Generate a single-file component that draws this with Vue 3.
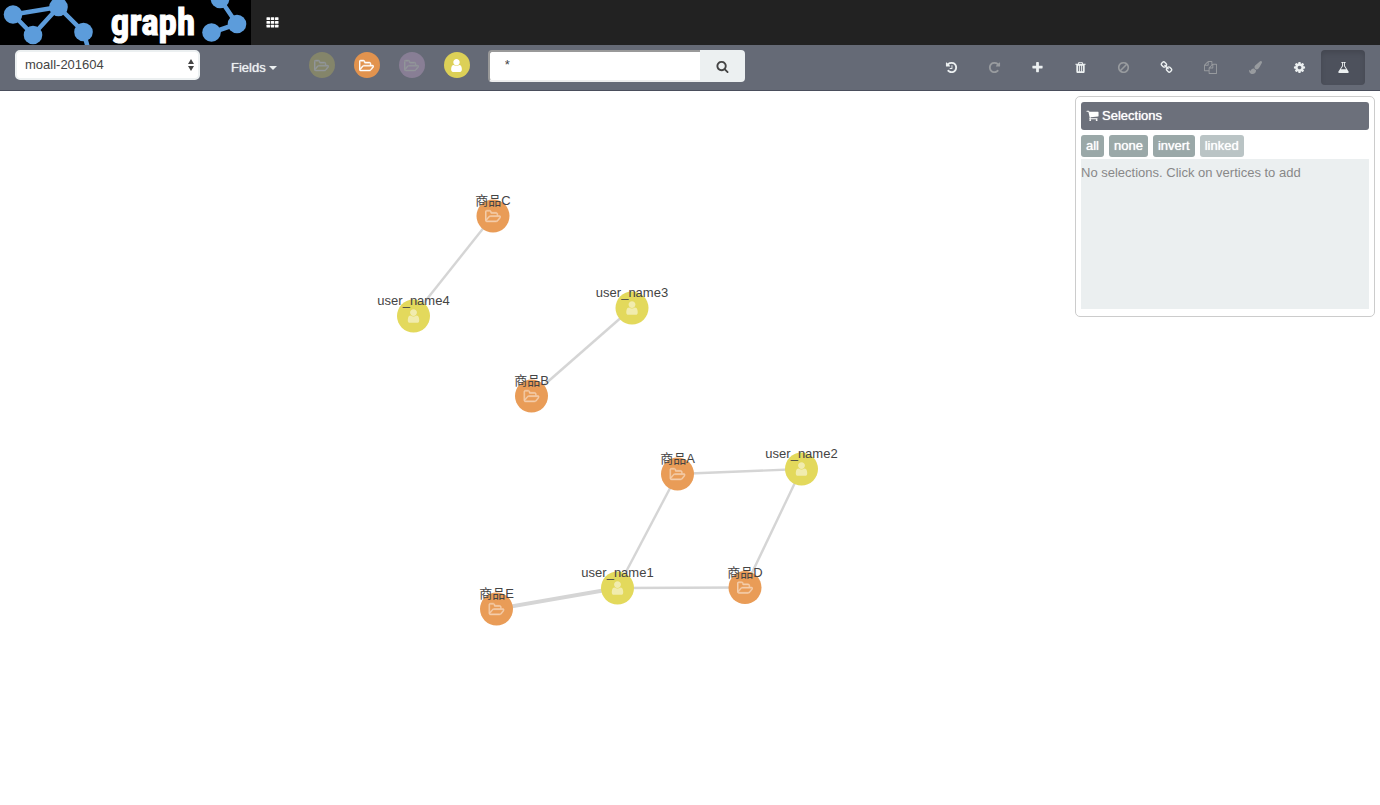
<template>
  <div class="app">
    <header class="navbar">
      <a class="brand" href="#" aria-label="graph">
        <svg width="251" height="45" viewBox="0 0 251 45">
          <rect width="251" height="45" fill="#000" />
          <g stroke="#5c9cdb" stroke-width="4.500" fill="none">
            <path d="M33 35L13 14.500L58.500 7L33 35M58.500 7L83.500 32L88 48" />
            <path d="M220 -1L237 24L212 32.500" />
          </g>
          <g fill="#5c9cdb">
            <circle cx="13" cy="14.500" r="9.300" />
            <circle cx="58.500" cy="7" r="9.300" />
            <circle cx="33" cy="35" r="9.300" />
            <circle cx="83.500" cy="32" r="9.300" />
            <circle cx="220" cy="-1" r="9.300" />
            <circle cx="237" cy="24" r="9.300" />
            <circle cx="211.500" cy="32.500" r="9.300" />
          </g>
          <text class="brand-text" x="153" y="35" text-anchor="middle">graph</text>
        </svg>
      </a>
      <button class="apps" type="button" aria-label="Apps">
        <svg class="icon" viewBox="0 0 26 26">
          <template v-for="row in 3" :key="row">
            <rect
              v-for="col in 3"
              :key="col"
              :x="col * 8.500 - 7.500"
              :y="row * 7.500 - 5"
              width="7"
              height="5.500"
              rx="1"
            />
          </template>
        </svg>
      </button>
    </header>

    <form class="toolbar" @submit.prevent>
      <div class="select-wrap">
        <select v-model="index" class="index-select" aria-label="Index">
          <option>moall-201604</option>
        </select>
        <svg class="select-arrows" width="6" height="12" viewBox="0 0 6 12">
          <path d="M0 5L3 0L6 5zM0 7L3 12L6 7z" />
        </svg>
      </div>

      <button class="fields" type="button">
        Fields
        <span class="caret"></span>
      </button>

      <div class="field-list">
        <button
          v-for="field in fields"
          :key="field.name"
          class="field"
          :class="[field.type, { inactive: !field.active }]"
          type="button"
          :aria-label="field.name"
        >
          <svg class="field-icon" :class="field.icon" :viewBox="icons[field.icon].box">
            <path :d="icons[field.icon].path" />
          </svg>
        </button>
      </div>

      <div class="search">
        <input v-model="query" class="search-input" type="text" aria-label="Search" />
        <button class="search-btn" type="submit" aria-label="Search">
          <svg class="icon" viewBox="0 0 1792 1792"><path :d="icons.search.path" /></svg>
        </button>
      </div>

      <div class="actions">
        <button
          v-for="action in actions"
          :key="action.icon"
          class="action"
          :class="{ wide: action.wide, active: action.active }"
          type="button"
          :disabled="action.disabled"
          :aria-label="action.label"
        >
          <svg class="icon" viewBox="0 0 1792 1792"><path :d="icons[action.icon].path" /></svg>
        </button>
      </div>
    </form>

    <main class="workspace">
      <svg class="graph">
        <line
          v-for="edge in edges"
          :key="edge.from + edge.to"
          class="edge"
          :x1="nodes[edge.from].x"
          :y1="nodes[edge.from].y"
          :x2="nodes[edge.to].x"
          :y2="nodes[edge.to].y"
          :stroke-width="edge.weight"
        />
        <g
          v-for="(node, id) in nodes"
          :key="id"
          class="node"
          :transform="`translate(${node.x}, ${node.y})`"
        >
          <circle r="16.500" :class="node.icon" />
          <svg
            class="node-icon"
            :class="node.icon"
            x="-8"
            y="-8"
            width="16"
            height="16"
            :viewBox="icons[node.icon].box"
          >
            <path :d="icons[node.icon].path" />
          </svg>
          <text y="-11" text-anchor="middle">{{ node.label }}</text>
        </g>
      </svg>

      <aside class="sidebar">
        <h2 class="sidebar-header">
          <svg class="icon" viewBox="0 0 1792 1792"><path :d="icons.cart.path" /></svg>
          Selections
        </h2>
        <div class="sidebar-buttons">
          <button type="button">all</button>
          <button type="button">none</button>
          <button type="button">invert</button>
          <button type="button" disabled>linked</button>
        </div>
        <div class="selection-list">
          <p>No selections. Click on vertices to add</p>
        </div>
      </aside>
    </main>
  </div>
</template>

<script setup>
import { ref } from 'vue'

const index = ref('moall-201604')
const query = ref('*')

const square = '0 0 1792 1792'

const icons = {
  folder: {
    box: '0 0 1920 1792',
    path: 'M1781 1000q0-22-31-22h-1088q-40 0-85.5 21.5t-71.5 52.5l-294 363q-18 24-18 40 0 22 31 22h1088q40 0 86-22t71-53l294-363q18-22 18-39zm-1119-150h768v-160q0-40-28-68t-68-28h-576q-40 0-68-28t-28-68v-64q0-40-28-68t-68-28h-320q-40 0-68 28t-28 68v853l256-315q44-53 116-87.5t140-34.5zm1247 150q0 62-46 120l-295 363q-43 53-116 87.5t-140 34.5h-1088q-92 0-158-66t-66-158v-960q0-92 66-158t158-66h320q92 0 158 66t66 158v32h544q92 0 158 66t66 158v160h192q54 0 99 24.5t67 70.5q15 32 15 68z'
  },
  user: {
    box: square,
    path: 'M1536 1399q0 109-62.5 187t-150.5 78h-854q-88 0-150.5-78t-62.5-187q0-85 8.5-160.5t31.5-152 58.5-131 94-89 134.5-34.5q131 128 313 128t313-128q76 0 134.5 34.5t94 89 58.5 131 31.5 152 8.5 160.5zm-256-887q0 159-112.5 271.5t-271.5 112.5-271.5-112.5-112.5-271.5 112.5-271.5 271.5-112.5 271.5 112.5 112.5 271.5z'
  },
  search: {
    path: 'M1216 832q0-185-131.5-316.5t-316.5-131.5-316.5 131.5-131.5 316.5 131.5 316.5 316.5 131.5 316.5-131.5 131.5-316.5zm512 832q0 52-38 90t-90 38q-54 0-90-38l-343-342q-179 124-399 124-143 0-273.5-55.5t-225-150-150-225-55.5-273.5 55.5-273.5 150-225 225-150 273.5-55.5 273.5 55.5 225 150 150 225 55.5 273.5q0 220-124 399l343 343q37 37 37 90z'
  },
  history: {
    path: 'M1664 896q0 156-61 298t-164 245-245 164-298 61q-172 0-327-72.5t-264-204.5q-7-10-6.5-22.5t8.5-20.5l137-138q10-9 25-9 16 2 23 12 73 95 179 147t225 52q104 0 198.5-40.5t163.5-109.5 109.5-163.5 40.5-198.5-40.5-198.5-109.5-163.5-163.5-109.5-198.5-40.5q-98 0-188 35.5t-160 101.5l137 138q31 30 14 69-17 40-59 40h-448q-26 0-45-19t-19-45v-448q0-42 40-59 39-17 69 14l130 129q107-101 244.5-156.5t284.5-55.5q156 0 298 61t245 164 164 245 61 298zm-640-288v448q0 14-9 23t-23 9h-320q-14 0-23-9t-9-23v-64q0-14 9-23t23-9h224v-352q0-14 9-23t23-9h64q14 0 23 9t9 23z'
  },
  repeat: {
    path: 'M1664 256v448q0 26-19 45t-45 19h-448q-42 0-59-40-17-39 14-69l138-138q-148-137-349-137-104 0-198.5 40.5t-163.5 109.5-109.5 163.5-40.5 198.5 40.5 198.5 109.5 163.5 163.5 109.5 198.5 40.5q119 0 225-52t179-147q7-10 23-12 15 0 25 9l137 138q9 8 9.5 20.5t-7.5 22.5q-109 132-264 204.5t-327 72.5q-156 0-298-61t-245-164-164-245-61-298 61-298 164-245 245-164 298-61q147 0 284.5 55.5t244.5 156.5l130-129q29-31 70-14 39 17 39 59z'
  },
  plus: {
    path: 'M1600 736v192q0 40-28 68t-68 28h-416v416q0 40-28 68t-68 28h-192q-40 0-68-28t-28-68v-416h-416q-40 0-68-28t-28-68v-192q0-40 28-68t68-28h416v-416q0-40 28-68t68-28h192q40 0 68 28t28 68v416h416q40 0 68 28t28 68z'
  },
  trash: {
    path: 'M704 1376v-704q0-14-9-23t-23-9h-64q-14 0-23 9t-9 23v704q0 14 9 23t23 9h64q14 0 23-9t9-23zm256 0v-704q0-14-9-23t-23-9h-64q-14 0-23 9t-9 23v704q0 14 9 23t23 9h64q14 0 23-9t9-23zm256 0v-704q0-14-9-23t-23-9h-64q-14 0-23 9t-9 23v704q0 14 9 23t23 9h64q14 0 23-9t9-23zm-544-992h448l-48-117q-7-9-17-11h-317q-10 2-17 11zm928 32v64q0 14-9 23t-23 9h-96v948q0 83-47 143.5t-113 60.5h-832q-66 0-113-58.5t-47-141.5v-952h-96q-14 0-23-9t-9-23v-64q0-14 9-23t23-9h309l70-167q15-37 54-63t79-26h320q40 0 79 26t54 63l70 167h309q14 0 23 9t9 23z'
  },
  ban: {
    path: 'M1440 893q0-161-87-295l-754 753q137 89 297 89 111 0 211.5-43.5t173.5-116.5 116-174.5 43-212.5zm-999 299l755-754q-135-91-300-91-148 0-273 73t-198 199-73 274q0 162 89 299zm1223-299q0 157-61 300t-163.5 246-245 164-298.5 61-298.5-61-245-164-163.5-246-61-300 61-299.5 163.5-245.5 245-164 298.5-61 298.5 61 245 164 163.5 245.5 61 299.5z'
  },
  link: {
    path: 'M1520 1216q0-40-28-68l-208-208q-28-28-68-28-42 0-72 32 3 3 19 18.5t21.5 21.5 15 19 13 25.5 3.5 27.5q0 40-28 68t-68 28q-15 0-27.5-3.5t-25.5-13-19-15-21.5-21.5-18.5-19q-33 31-33 73 0 40 28 68l206 207q27 27 68 27 40 0 68-26l147-146q28-28 28-67zm-703-705q0-40-28-68l-206-207q-28-28-68-28-39 0-68 27l-147 146q-28 28-28 67 0 40 28 68l208 208q27 27 68 27 42 0 72-31-3-3-19-18.5t-21.5-21.5-15-19-13-25.5-3.5-27.5q0-40 28-68t68-28q15 0 27.5 3.5t25.5 13 19 15 21.5 21.5 18.5 19q33-31 33-73zm895 705q0 120-85 203l-147 146q-83 83-203 83-121 0-204-85l-206-207q-83-83-83-203 0-123 88-209l-88-88q-86 88-208 88-120 0-204-84l-208-208q-84-84-84-204t85-203l147-146q83-83 203-83 121 0 204 85l206 207q83 83 83 203 0 123-88 209l88 88q86-88 208-88 120 0 204 84l208 208q84 84 84 204z'
  },
  files: {
    path: 'M1696 384q40 0 68 28t28 68v1216q0 40-28 68t-68 28h-960q-40 0-68-28t-28-68v-288h-544q-40 0-68-28t-28-68v-672q0-40 20-88t48-76l408-408q28-28 76-48t88-20h416q40 0 68 28t28 68v328q68-40 128-40h416zm-544 213l-299 299h299v-299zm-640-384l-299 299h299v-299zm196 647l316-316v-416h-384v416q0 40-28 68t-68 28h-416v640h512v-256q0-40 20-88t48-76zm956 804v-1152h-384v416q0 40-28 68t-68 28h-416v640h896z'
  },
  brush: {
    path: 'M1615 0q70 0 122.5 46.5t52.5 116.5q0 63-45 151-332 629-465 752-97 91-218 91-126 0-216.5-92.5t-90.5-219.5q0-128 92-212l638-579q59-54 130-54zm-909 1034q39 76 106.5 130t150.5 76l1 71q4 213-129.5 347t-348.5 134q-123 0-218-46.5t-152.5-127.5-86.5-183-29-220q7 5 41 30t62 44.5 59 36.5 46 17q41 0 55-37 25-66 57.5-112.5t69.5-76 88-47.5 103-25.5 125-10.5z'
  },
  cog: {
    path: 'M1152 896q0-106-75-181t-181-75-181 75-75 181 75 181 181 75 181-75 75-181zm512-109v222q0 12-8 23t-20 13l-185 28q-19 54-39 91 35 50 107 138 10 12 10 25t-9 23q-27 37-99 108t-94 71q-12 0-26-9l-138-108q-44 23-91 38-16 136-29 186-7 28-36 28h-222q-14 0-24.5-8.5t-11.5-21.5l-28-184q-49-16-90-37l-141 107q-10 9-25 9-14 0-25-11-126-114-165-168-7-10-7-23 0-12 8-23 15-21 51-66.5t54-70.5q-27-50-41-99l-183-27q-13-2-21-12.5t-8-23.5v-222q0-12 8-23t19-13l186-28q14-46 39-92-40-57-107-138-10-12-10-24 0-10 9-23 26-36 98.5-107.5t94.5-71.5q13 0 26 10l138 107q44-23 91-38 16-136 29-186 7-28 36-28h222q14 0 24.5 8.5t11.5 21.5l28 184q49 16 90 37l142-107q9-9 24-9 13 0 25 10 129 119 165 170 7 8 7 22 0 12-8 23-15 21-51 66.5t-54 70.5q26 50 41 98l183 28q13 2 21 12.5t8 23.5z'
  },
  flask: {
    path: 'M1591 1448q56 89 21.5 152.5t-140.5 63.5h-1152q-106 0-140.5-63.5t21.5-152.5l503-793v-399h-64q-26 0-45-19t-19-45 19-45 45-19h512q26 0 45 19t19 45-19 45-45 19h-64v399zm-779-725l-272 429h712l-272-429-20-31v-436h-128v436z'
  },
  cart: {
    path: 'M704 1536q0 52-38 90t-90 38-90-38-38-90 38-90 90-38 90 38 38 90zm896 0q0 52-38 90t-90 38-90-38-38-90 38-90 90-38 90 38 38 90zm128-1088v512q0 24-16.5 42.5t-40.5 21.5l-1044 122q13 60 13 70 0 16-24 64h920q26 0 45 19t19 45-19 45-45 19h-1024q-26 0-45-19t-19-45q0-11 8-31.5t16-36 21.5-40 15.5-29.5l-177-823h-204q-26 0-45-19t-19-45 19-45 45-19h256q16 0 28.5 6.5t19.5 15.5 13 24.5 8 26 5.5 29.5 4.5 26h1201q26 0 45 19t19 45z'
  }
}

const fields = [
  { name: 'Field 1', type: 'olive', icon: 'folder', active: false },
  { name: 'Field 2', type: 'orange', icon: 'folder', active: true },
  { name: 'Field 3', type: 'purple', icon: 'folder', active: false },
  { name: 'Field 4', type: 'yellow', icon: 'user', active: true }
]

const actions = [
  { icon: 'history', label: 'Undo' },
  { icon: 'repeat', label: 'Redo', disabled: true },
  { icon: 'plus', label: 'Expand selection' },
  { icon: 'trash', label: 'Delete' },
  { icon: 'ban', label: 'Block', disabled: true },
  { icon: 'link', label: 'Add links' },
  { icon: 'files', label: 'Copy', wide: true, disabled: true },
  { icon: 'brush', label: 'Style', wide: true, disabled: true },
  { icon: 'cog', label: 'Settings' },
  { icon: 'flask', label: 'Advanced', active: true }
]

// positions are relative to the workspace
const nodes = {
  c: { label: '商品C', icon: 'folder', x: 493, y: 125 },
  u4: { label: 'user_name4', icon: 'user', x: 413.5, y: 225 },
  u3: { label: 'user_name3', icon: 'user', x: 632, y: 217 },
  b: { label: '商品B', icon: 'folder', x: 531.5, y: 305 },
  a: { label: '商品A', icon: 'folder', x: 677.5, y: 383 },
  u2: { label: 'user_name2', icon: 'user', x: 801.5, y: 378 },
  u1: { label: 'user_name1', icon: 'user', x: 617.5, y: 497 },
  d: { label: '商品D', icon: 'folder', x: 745, y: 496.5 },
  e: { label: '商品E', icon: 'folder', x: 496.5, y: 518 }
}

const edges = [
  { from: 'c', to: 'u4', weight: 2.4 },
  { from: 'u3', to: 'b', weight: 2.4 },
  { from: 'a', to: 'u2', weight: 2.4 },
  { from: 'a', to: 'u1', weight: 2.4 },
  { from: 'u2', to: 'd', weight: 2.4 },
  { from: 'u1', to: 'd', weight: 2.4 },
  { from: 'u1', to: 'e', weight: 4 }
]
</script>

<style>
body {
  margin: 0;
  background: #fff;
}
</style>

<style scoped>
.app {
  display: flex;
  flex-direction: column;
  min-height: 100vh;
  font-family: "Liberation Sans", "Noto Sans CJK SC", sans-serif;
  font-size: 13px;
  color: #444;
}

button {
  margin: 0;
  padding: 0;
  border: none;
  background: none;
  font: inherit;
  color: inherit;
  cursor: pointer;
}

button:disabled {
  cursor: default;
}

.icon {
  display: block;
  width: 13px;
  height: 13px;
  fill: currentColor;
}

.navbar {
  display: flex;
  height: 45px;
  background: #222;
}

.brand,
.brand svg {
  display: block;
}

.brand-text {
  font-family: "Roboto Condensed", "Open Sans Condensed", "DejaVu Sans Condensed", sans-serif;
  font-weight: bold;
  font-size: 37px;
  fill: #fff;
  stroke: #fff;
  stroke-width: 1px;
}

.apps {
  padding: 0 15px;
  color: #fff;
}

.toolbar {
  display: flex;
  align-items: flex-start;
  height: 40px;
  padding: 5px 15px 0;
  background: #656a76;
  border-bottom: 1px solid #4a4e5c;
}

.select-wrap {
  position: relative;
  width: 185px;
}

.index-select {
  display: block;
  width: 100%;
  height: 30px;
  padding: 0 20px 2px 8px;
  border: 2px solid #ecf0f1;
  border-radius: 5px;
  background: #fff;
  font: inherit;
  color: #444;
  appearance: none;
}

.select-arrows {
  position: absolute;
  top: 9px;
  right: 6px;
  fill: #444;
  pointer-events: none;
}

.fields {
  display: flex;
  align-items: center;
  gap: 3px;
  height: 35px;
  margin-left: 31px;
  color: #ecf0f1;
  text-shadow: 0 0 1px #ecf0f1;
}

.caret {
  border-top: 4px solid #ecf0f1;
  border-left: 4px solid transparent;
  border-right: 4px solid transparent;
}

.field-list {
  display: flex;
  gap: 19px;
  margin: 2px 18px 0 32px;
}

.field {
  display: flex;
  align-items: center;
  justify-content: center;
  width: 26px;
  height: 26px;
  border-radius: 50%;
  color: #fff;
}

.field-icon {
  width: 15px;
  height: 15px;
  fill: currentColor;
}

.field-icon.folder,
.node-icon.folder {
  stroke: currentColor;
  stroke-width: 60px;
}

.field.inactive {
  color: #92969a;
}

.olive {
  background: #84856a;
}

.orange {
  background: #e2934e;
}

.purple {
  background: #887e95;
}

.yellow {
  background: #dcd057;
}

.search {
  display: flex;
  width: 257px;
  height: 32px;
}

.search-input {
  flex: 1;
  min-width: 0;
  padding: 0 15px 4px;
  border: 2px solid;
  border-color: #999 #eee #eee #999;
  border-right: none;
  border-radius: 4px 0 0 4px;
  background: #fff;
  font: inherit;
  color: #444;
  outline: none;
}

.search-btn {
  padding: 0 16px;
  border-radius: 0 4px 4px 0;
  background: #ecf0f1;
  color: #444;
}

.actions {
  display: flex;
  margin-left: auto;
}

.action {
  height: 35px;
  padding: 0 15px;
  color: #ecf0f1;
}

.action.wide {
  padding: 0 16px;
}

.action:disabled {
  color: #989b9f;
}

.action.active {
  padding-left: 16px;
  border-radius: 4px;
  background: #4d515c;
  box-shadow: inset 0 3px 5px rgba(0, 0, 0, 0.125);
}

.workspace {
  position: relative;
  display: flex;
  flex: 1;
  min-height: 600px;
}

.graph {
  flex: 1;
  min-width: 0;
}

.edge {
  stroke: #d5d5d5;
}

.node circle.folder {
  fill: #e99c57;
}

.node circle.user {
  fill: #e3d95c;
}

.node-icon {
  color: #fff;
  fill: currentColor;
  opacity: 0.5;
}

.node text {
  fill: #444;
}

.sidebar {
  position: absolute;
  top: 5px;
  right: 5px;
  box-sizing: border-box;
  width: 300px;
  padding: 5px 5px 7px;
  border: 1px solid #ccc;
  border-radius: 5px;
  background: #fff;
}

.sidebar-header {
  display: flex;
  align-items: center;
  gap: 3px;
  box-sizing: border-box;
  height: 28px;
  margin: 0 0 5px;
  padding: 0 5px 2px;
  border-radius: 3px;
  background: #6c707b;
  color: #fff;
  font-size: 13px;
  font-weight: normal;
  text-shadow: 0 0 1px #fff;
}

.sidebar-buttons {
  display: flex;
  gap: 5px;
  margin-bottom: 2px;
}

.sidebar-buttons button {
  height: 22px;
  padding: 0 5px 2px;
  border-radius: 3px;
  background: #9aa8a8;
  color: #fff;
  text-shadow: 0 0 1px #fff;
}

.sidebar-buttons button:disabled {
  background: #bac4c5;
}

.selection-list {
  height: 150px;
  background: #ebeff0;
}

.selection-list p {
  margin: 0;
  padding-top: 5px;
  line-height: 18px;
  color: #888;
}
</style>
